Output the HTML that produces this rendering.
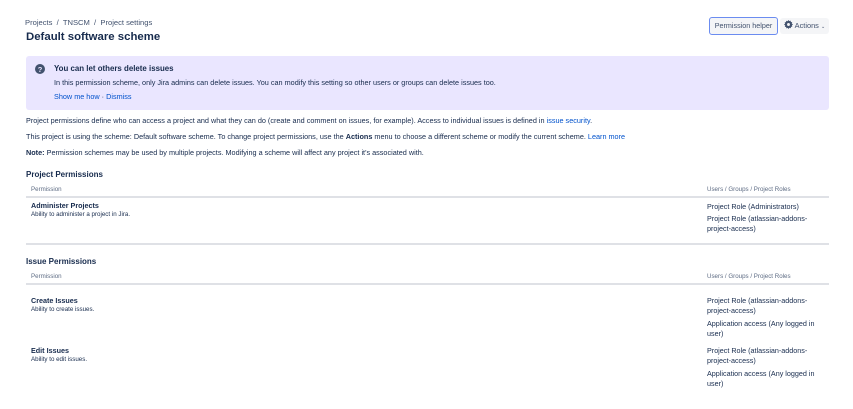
<!DOCTYPE html>
<html><head><meta charset="utf-8"><style>
*{margin:0;padding:0;box-sizing:border-box}
body{width:853px;height:409px;overflow:hidden;background:#fff;font-family:"Liberation Sans",sans-serif;color:#172b4d;position:relative}
.a{position:absolute;white-space:nowrap;line-height:1}
.s{font-size:7.2px}
.p{font-size:7.28px}
.xs{font-size:6.2px}
.b{font-weight:bold}
.g{color:#5e6c84}
a{color:#0052cc;text-decoration:none}
.line{position:absolute;left:26px;width:803px;height:2px;background:#dfe1e6}
</style></head><body>
<div class="a s g" style="left:25px;top:19px;font-size:7.6px;color:#42526e">Projects &nbsp;/&nbsp; TNSCM &nbsp;/&nbsp; Project settings</div>
<div class="a b" style="left:26px;top:32px;font-size:11.4px;color:#172b4d">Default software scheme</div>

<div style="position:absolute;left:709px;top:17px;width:69px;height:18px;border:1.5px solid #6b8cf0;border-radius:3px;background:#f4f5f7;font-size:7.2px;color:#42526e;text-align:center;line-height:15px">Permission helper</div>
<div style="position:absolute;left:780px;top:18px;width:49px;height:16px;background:#f4f5f7;border-radius:3px;font-size:7.4px;color:#42526e;line-height:16px;padding-left:4px">
<svg width="9" height="9" viewBox="0 0 16 16" style="vertical-align:-1px"><path fill="#42526e" d="M8 0l1.5 2 2.3-.8.4 2.4 2.4.4-.8 2.3L16 8l-2 1.5.8 2.3-2.4.4-.4 2.4-2.3-.8L8 16l-1.5-2-2.3.8-.4-2.4-2.4-.4.8-2.3L0 8l2-1.5-.8-2.3 2.4-.4.4-2.4 2.3.8z"/><circle cx="8" cy="8" r="2.6" fill="#f4f5f7"/></svg> Actions <span style="font-size:5px">&#8964;</span></div>

<div style="position:absolute;left:26px;top:56px;width:803px;height:54px;background:#eae6ff;border-radius:3px"></div>
<svg class="a" style="left:35px;top:64px" width="10" height="10" viewBox="0 0 10 10"><circle cx="5" cy="5" r="5" fill="#42526e"/><text x="5" y="8" font-size="7.5" font-weight="bold" fill="#eae6ff" text-anchor="middle" font-family="Liberation Sans">?</text></svg>
<div class="a b" style="left:54px;top:65px;font-size:7.9px">You can let others delete issues</div>
<div class="a p" style="left:54px;top:79px">In this permission scheme, only Jira admins can delete issues. You can modify this setting so other users or groups can delete issues too.</div>
<div class="a p" style="left:54px;top:93px"><a>Show me how</a> · <a>Dismiss</a></div>

<div class="a p" style="left:26px;top:117px">Project permissions define who can access a project and what they can do (create and comment on issues, for example). Access to individual issues is defined in <a>issue security</a>.</div>
<div class="a p" style="left:26px;top:133px">This project is using the scheme: Default software scheme. To change project permissions, use the <b>Actions</b> menu to choose a different scheme or modify the current scheme. <a>Learn more</a></div>
<div class="a p" style="left:26px;top:149px"><b>Note:</b> Permission schemes may be used by multiple projects. Modifying a scheme will affect any project it's associated with.</div>

<div class="a b" style="left:26px;top:171px;font-size:8px">Project Permissions</div>
<div class="a xs g" style="left:31px;top:187px">Permission</div>
<div class="a xs g" style="left:707px;top:187px">Users / Groups / Project Roles</div>
<div class="line" style="top:196px"></div>
<div class="a b s" style="left:31px;top:202px">Administer Projects</div>
<div class="a xs" style="left:31px;top:212px">Ability to administer a project in Jira.</div>
<div class="a s" style="left:707px;top:203px">Project Role (Administrators)</div>
<div class="a s" style="left:707px;top:215px">Project Role (atlassian-addons-</div>
<div class="a s" style="left:707px;top:225px">project-access)</div>
<div class="line" style="top:243px"></div>

<div class="a b" style="left:26px;top:258px;font-size:8px">Issue Permissions</div>
<div class="a xs g" style="left:31px;top:274px">Permission</div>
<div class="a xs g" style="left:707px;top:274px">Users / Groups / Project Roles</div>
<div class="line" style="top:283px"></div>
<div class="a b s" style="left:31px;top:297px">Create Issues</div>
<div class="a xs" style="left:31px;top:307px">Ability to create issues.</div>
<div class="a s" style="left:707px;top:297px">Project Role (atlassian-addons-</div>
<div class="a s" style="left:707px;top:307px">project-access)</div>
<div class="a s" style="left:707px;top:320px">Application access (Any logged in</div>
<div class="a s" style="left:707px;top:330px">user)</div>
<div class="a b s" style="left:31px;top:347px">Edit Issues</div>
<div class="a xs" style="left:31px;top:357px">Ability to edit issues.</div>
<div class="a s" style="left:707px;top:347px">Project Role (atlassian-addons-</div>
<div class="a s" style="left:707px;top:357px">project-access)</div>
<div class="a s" style="left:707px;top:370px">Application access (Any logged in</div>
<div class="a s" style="left:707px;top:380px">user)</div>
</body></html>
